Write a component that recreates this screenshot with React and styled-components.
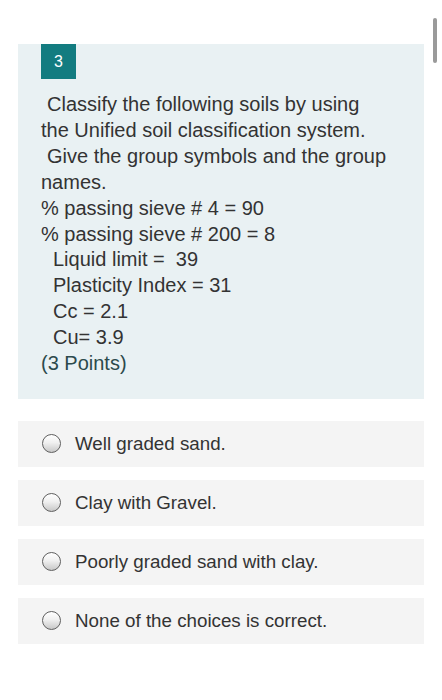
import React from 'react'
import styled, { createGlobalStyle } from 'styled-components';

const GlobalStyle = createGlobalStyle`
  html, body {
    margin: 0;
    padding: 0;
    background: #ffffff;
  }
  body {
    font-family: "Liberation Sans", Arial, Helvetica, sans-serif;
    color: #333333;
  }
`;

const questionLines = [
  { text: 'Classify the following soils by using', indent: 6 },
  { text: 'the Unified soil classification system.', indent: 0 },
  { text: 'Give the group symbols and the group', indent: 6 },
  { text: 'names.', indent: 0 },
  { text: '% passing sieve # 4 = 90', indent: 0 },
  { text: '% passing sieve # 200 = 8', indent: 0 },
  { text: 'Liquid limit =  39', indent: 12 },
  { text: 'Plasticity Index = 31', indent: 12 },
  { text: 'Cc = 2.1', indent: 12 },
  { text: 'Cu= 3.9', indent: 12 },
];

const choices = [
  'Well graded sand.',
  'Clay with Gravel.',
  'Poorly graded sand with clay.',
  'None of the choices is correct.',
];

export default function App() {
  return (
    <>
      <GlobalStyle />
      <Page>
        <Question>
          <Badge>3</Badge>
          <Body>
            {questionLines.map((line, i) => (
              <Line key={i} $indent={line.indent}>{line.text}</Line>
            ))}
            <Points>(3 Points)</Points>
          </Body>
        </Question>
        <Choices>
          {choices.map((c) => (
            <Choice key={c}>
              <Radio />
              <ChoiceText>{c}</ChoiceText>
            </Choice>
          ))}
        </Choices>
      </Page>
      <Scrollbar />
    </>
  )
}

const Page = styled.div`
  width: 406px;
  padding: 44px 0 40px 18px;
  display: flex;
  flex-direction: column;
  gap: 22px;
`;

const Question = styled.div`
  background: #e9f1f3;
  padding: 0 20px 22px 23px;
`;

const Badge = styled.div`
  width: 35px;
  height: 35px;
  background: #137c80;
  color: #ffffff;
  font-size: 16px;
  display: flex;
  align-items: center;
  justify-content: center;
`;

const Body = styled.div`
  margin-top: 13px;
  font-size: 20px;
  line-height: 25.9px;
`;

const Line = styled.div`
  padding-left: ${(p) => p.$indent}px;
  white-space: pre;
`;

const Points = styled.div`
  color: #2c4a4c;
`;

const Choices = styled.div`
  display: flex;
  flex-direction: column;
  gap: 13px;
`;

const Choice = styled.div`
  height: 46px;
  background: #f4f4f4;
  display: flex;
  align-items: center;
  padding-left: 24px;
  gap: 14px;
`;

const Radio = styled.span`
  width: 17px;
  height: 17px;
  border-radius: 50%;
  border: 1px solid #5f5f5f;
  background: linear-gradient(180deg, #ffffff 0%, #f0f0f0 45%, #c8c8c8 100%);
  flex: none;
`;

const ChoiceText = styled.span`
  font-size: 18.75px;
  color: #333333;
`;

const Scrollbar = styled.div`
  position: fixed;
  top: 18px;
  right: 5px;
  width: 4px;
  height: 45px;
  border-radius: 2px;
  background: #9a9a9a;
`;
